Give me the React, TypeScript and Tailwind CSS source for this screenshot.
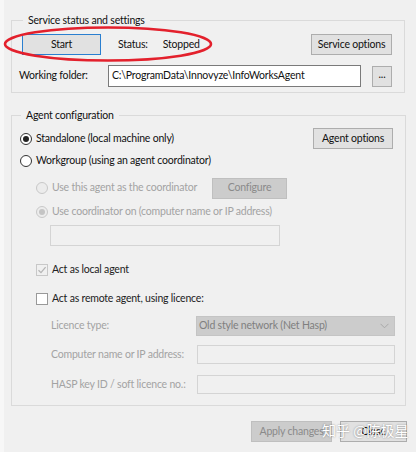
import React from "react";

const font = { fontFamily: 'Lato, "Noto Sans", sans-serif' };

const Btn = ({
  label,
  w,
  disabled,
  focus,
}: {
  label: string;
  w: string;
  disabled?: boolean;
  focus?: boolean;
}) => (
  <div
    className={
      "h-[21px] flex items-center justify-center whitespace-nowrap border " +
      w +
      " " +
      (disabled
        ? "bg-[#cccccc] border-[#bfbfbf] text-[#8a8a8a]"
        : focus
          ? "bg-[#e1e1e1] border-[#2a7fd0] text-[#111]"
          : "bg-[#e1e1e1] border-[#adadad] text-[#111]")
    }
  >
    {label}
  </div>
);

const Radio = ({ checked, disabled }: { checked?: boolean; disabled?: boolean }) => (
  <span
    className={
      "w-[12px] h-[12px] rounded-full border flex items-center justify-center shrink-0 " +
      (disabled ? "border-[#c8c8c8] bg-[#ececec]" : "border-[#333] bg-white")
    }
  >
    {checked && (
      <span
        className={
          "w-[6px] h-[6px] rounded-full " + (disabled ? "bg-[#c4c4c4]" : "bg-[#222]")
        }
      />
    )}
  </span>
);

const Check = ({ checked, disabled }: { checked?: boolean; disabled?: boolean }) => (
  <span
    className={
      "w-[12px] h-[12px] border flex items-center justify-center shrink-0 " +
      (disabled ? "border-[#c8c8c8] bg-[#f0f0f0]" : "border-[#999] bg-white")
    }
  >
    {checked && (
      <svg width="10" height="10" viewBox="0 0 10 10">
        <path d="M1.5 5.2 L4 7.6 L8.6 2.2" fill="none" stroke="#b5b5b5" strokeWidth="1.3" />
      </svg>
    )}
  </span>
);

export default function App() {
  return (
    <div
      className="relative w-[416px] h-[452px] bg-[#f0f0f0] text-[10.5px] tracking-[-0.2px] text-[#111] overflow-hidden whitespace-nowrap"
      style={font}
    >
      <div className="absolute left-0 top-0 bottom-0 w-[4px] bg-[#f7f7f7]" />
      <div className="pl-[11px] pr-[11px] pt-[13px]">
        <fieldset className="border border-[#dadada] px-[10px] pb-[5px]">
          <legend className="px-[5px] ml-[1px] leading-[15px]">Service status and settings</legend>
          <div className="flex items-center mt-[6px]">
            <Btn label="Start" w="w-[79px]" focus />
            <span className="ml-[17px]">Status:</span>
            <span className="ml-[15px]">Stopped</span>
            <div className="ml-auto mr-[2px]">
              <Btn label="Service options" w="w-[81px]" />
            </div>
          </div>
          <div className="flex items-center mt-[10px]">
            <span className="ml-[-3px] w-[89px]">Working folder:</span>
            <div className="w-[253px] h-[22px] border border-[#7a7a7a] bg-white flex items-center pl-[3px]">
              C:\ProgramData\Innovyze\InfoWorksAgent
            </div>
            <div className="ml-auto mr-[2px] w-[20px] h-[21px] border border-[#adadad] bg-[#e1e1e1] flex items-center justify-center leading-none pb-[3px]">
              ...
            </div>
          </div>
        </fieldset>

        <fieldset className="mt-[15px] border border-[#dadada] pl-[8px] pr-[10px] pb-[11px] mr-[-1px]">
          <legend className="px-[5px] ml-[1px] leading-[15px]">Agent configuration</legend>
          <div className="flex items-center h-[21px] mt-[5px]">
            <Radio checked />
            <span className="ml-[4px]">Standalone (local machine only)</span>
            <div className="ml-auto mr-[2px]">
              <Btn label="Agent options" w="w-[80px]" />
            </div>
          </div>
          <div className="flex items-center h-[14px] mt-[5px]">
            <Radio />
            <span className="ml-[4px]">Workgroup (using an agent coordinator)</span>
          </div>
          <div className="pl-[16px] text-[#a3a3a3]">
            <div className="flex items-center h-[20px] mt-[10px]">
              <Radio disabled />
              <span className="ml-[4px] w-[160px]">Use this agent as the coordinator</span>
              <Btn label="Configure" w="w-[75px]" disabled />
            </div>
            <div className="flex items-center h-[14px] mt-[7px]">
              <Radio checked disabled />
              <span className="ml-[4px]">Use coordinator on (computer name or IP address)</span>
            </div>
            <div className="ml-[14px] mt-[6px] w-[230px] h-[21px] border border-[#d4d4d4]" />
            <div className="flex items-center h-[14px] mt-[17px]">
              <Check checked disabled />
              <span className="ml-[4px] text-[#222]">Act as local agent</span>
            </div>
            <div className="flex items-center h-[14px] mt-[15px]">
              <Check />
              <span className="ml-[4px] text-[#222]">Act as remote agent, using licence:</span>
            </div>
            <div className="pl-[15px]">
              <div className="flex items-center h-[20px] mt-[10px]">
                <span className="w-[145px]">Licence type:</span>
                <div className="flex-1 h-[20px] bg-[#cccccc] border border-[#c4c4c4] flex items-center pl-[2px] pr-[5px] text-[#7f7f7f]">
                  <span>Old style network (Net Hasp)</span>
                  <svg className="ml-auto" width="9" height="6" viewBox="0 0 9 6">
                    <path d="M0.5 0.8 L4.5 4.8 L8.5 0.8" fill="none" stroke="#a8a8a8" strokeWidth="1" />
                  </svg>
                </div>
              </div>
              <div className="flex items-center h-[19px] mt-[9px]">
                <span className="w-[146px]">Computer name or IP address:</span>
                <div className="flex-1 h-[19px] border border-[#d4d4d4]" />
              </div>
              <div className="flex items-center h-[19px] mt-[11px]">
                <span className="w-[146px]">HASP key ID / soft licence no.:</span>
                <div className="flex-1 h-[19px] border border-[#d4d4d4]" />
              </div>
            </div>
          </div>
        </fieldset>

        <div className="flex justify-end gap-[8px] mt-[15px] mr-[-2px]">
          <Btn label="Apply changes" w="w-[81px]" disabled />
          <Btn label="Close" w="w-[67px]" />
        </div>
      </div>

      <svg
        className="absolute left-0 top-0 pointer-events-none"
        width="416"
        height="80"
        viewBox="0 0 416 80"
      >
        <ellipse cx="108" cy="44" rx="103" ry="16.5" fill="none" stroke="#e3202c" strokeWidth="2.6" />
      </svg>

      <div
        className="absolute left-[322px] top-[420px] text-[14px] tracking-normal text-white pointer-events-none"
        style={{
          fontFamily: '"Noto Sans CJK SC", sans-serif',
          textShadow: "0 0 2px rgba(0,0,0,0.45)",
        }}
      >
        知乎 @陈极星
      </div>
    </div>
  );
}
